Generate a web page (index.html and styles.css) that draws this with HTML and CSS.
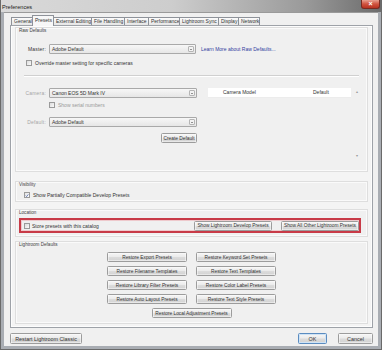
FILE: index.html
```html
<!DOCTYPE html>
<html>
<head>
<meta charset="utf-8">
<link rel="stylesheet" href="styles.css">
</head>
<body>
<div class="window">
  <div class="titlebar">
    <span class="title">Preferences</span>
    <div class="close">×</div>
  </div>
  <div class="client">
    <div class="tabs">
      <div class="tab t-general">General</div>
      <div class="tab active t-presets">Presets</div>
      <div class="tab t-ext">External Editing</div>
      <div class="tab t-file">File Handling</div>
      <div class="tab t-iface">Interface</div>
      <div class="tab t-perf">Performance</div>
      <div class="tab t-sync">Lightroom Sync</div>
      <div class="tab t-disp">Display</div>
      <div class="tab t-net">Network</div>
    </div>
    <div class="panel">
      <section class="group raw">
        <div class="glabel">Raw Defaults</div>
        <div class="row master-row">
          <span class="flabel">Master:</span>
          <div class="select master"><span>Adobe Default</span><i class="arrow"></i></div>
          <span class="link">Learn More about Raw Defaults...</span>
        </div>
        <div class="check override"><span class="box"></span><span>Override master setting for specific cameras</span></div>
        <div class="sep"></div>
        <div class="camera-area">
          <div class="cam-left">
            <div class="row">
              <span class="flabel dis">Camera:</span>
              <div class="select"><span>Canon EOS 5D Mark IV</span><i class="arrow"></i></div>
            </div>
            <div class="check serial"><span class="box"></span><span>Show serial numbers</span></div>
            <div class="row default-row">
              <span class="flabel dis">Default:</span>
              <div class="select"><span>Adobe Default</span><i class="arrow"></i></div>
            </div>
            <div class="create-wrap"><div class="btn create dim">Create Default</div></div>
          </div>
          <div class="table">
            <div class="tmain">
              <div class="thead"><span class="c1">Camera Model</span><span class="c2">Default</span></div>
              <div class="tbody"></div>
            </div>
            <div class="scroll"><span>▴</span><span>▾</span></div>
          </div>
        </div>
      </section>

      <section class="group vis">
        <div class="glabel">Visibility</div>
        <div class="check partial"><span class="box checked"><svg viewBox="0 0 6 6" width="5" height="5"><path d="M1 3.2 L2.4 4.6 L5 1.3" fill="none" stroke="#2b4a9a" stroke-width="1"/></svg></span><span>Show Partially Compatible Develop Presets</span></div>
      </section>

      <section class="group loc">
        <div class="glabel">Location</div>
        <div class="redbox">
          <div class="check store"><span class="box"></span><span>Store presets with this catalog</span></div>
          <div class="loc-btns">
            <div class="btn lbtn">Show Lightroom Develop Presets</div>
            <div class="btn lbtn">Show All Other Lightroom Presets</div>
          </div>
        </div>
      </section>

      <section class="group lrd">
        <div class="glabel">Lightroom Defaults</div>
        <div class="restore-grid">
          <div class="btn rbtn">Restore Export Presets</div>
          <div class="btn rbtn">Restore Keyword Set Presets</div>
          <div class="btn rbtn">Restore Filename Templates</div>
          <div class="btn rbtn">Restore Text Templates</div>
          <div class="btn rbtn">Restore Library Filter Presets</div>
          <div class="btn rbtn">Restore Color Label Presets</div>
          <div class="btn rbtn">Restore Auto Layout Presets</div>
          <div class="btn rbtn">Restore Text Style Presets</div>
          <div class="btn rbtn span2">Restore Local Adjustment Presets</div>
        </div>
      </section>
    </div>
    <div class="bottom">
      <div class="btn big restart">Restart Lightroom Classic</div>
      <div class="okc">
        <div class="btn big ok">OK</div>
        <div class="btn big cancel">Cancel</div>
      </div>
    </div>
  </div>
</div>
</body>
</html>
```
FILE: styles.css
```css
* { box-sizing: border-box; }
html, body { margin: 0; padding: 0; }
body {
  width: 382px;
  height: 350px;
  overflow: hidden;
  font-family: "Liberation Sans", Arial, sans-serif;
  font-size: 5px;
  color: #333;
  background: #f0f0f0;
}
.window {
  width: 382px;
  height: 350px;
  display: flex;
  flex-direction: column;
  background: #a9adb3;
  border: 1px solid #6a6a6a;
  border-top: none;
}
.titlebar {
  height: 12px;
  flex: none;
  position: relative;
  background: linear-gradient(to right, #d9d9d9 0%, #cdcdcd 45%, #9a9a9a 80%, #6c6c6c 100%);
  display: flex;
  align-items: center;
  padding-left: 1px;
}
.title {
  font-size: 5.6px;
  color: #1a1a1a;
  line-height: 8px;
  margin-top: 1px;
}
.close {
  position: absolute;
  right: 1px;
  top: 0;
  width: 19px;
  height: 9px;
  border: 1px solid #7a2a20;
  border-top: none;
  border-radius: 0 0 3px 3px;
  background: linear-gradient(#e8a090, #d0533f 50%, #b83220);
  color: #fff;
  font-size: 7px;
  line-height: 8px;
  text-align: center;
  font-weight: bold;
}
.client {
  flex: 1;
  margin: 0 3px 3px 3px;
  background: #f0f0f0;
  border-top: 1px solid #9a9a9a;
  padding: 1px 5px 0 6px;
  display: flex;
  flex-direction: column;
}
.tabs {
  height: 11px;
  display: flex;
  align-items: flex-end;
  padding-left: 1px;
  position: relative;
  z-index: 2;
}
.tab {
  height: 8px;
  border: 1px solid #8e9299;
  border-bottom: none;
  border-right: none;
  background: linear-gradient(#fbfbfb, #e6e6e6);
  padding: 0 2px;
  line-height: 7px;
  white-space: nowrap;
  color: #333;
  text-align: center;
}
.tab:last-child { border-right: 1px solid #8e9299; }
.tab.active {
  height: 11px;
  margin-bottom: -1px;
  background: #f7f7f7;
  border-right: 1px solid #8e9299;
  line-height: 9px;
  padding-bottom: 1px;
}
.tab.active + .tab { border-left: none; }
.t-general { width: 21px; }
.t-presets { width: 22px; }
.t-ext { width: 37px; }
.t-file { width: 33px; }
.t-iface { width: 24px; }
.t-perf { width: 31px; }
.t-sync { width: 39px; }
.t-disp { width: 20px; }
.t-net { width: 22px; }

.panel {
  height: 303px;
  border: 1px solid #9ea2a8;
  background: #f4f4f4;
  box-shadow: inset 0 0 0 1px #fdfdfd;
  padding: 1px 4px 0 4px;
  display: flex;
  flex-direction: column;
}
.group {
  border: 1px solid #dedede;
  box-shadow: inset 0 0 0 1px #fafafa;
  background: #f0f0f0;
  flex: none;
}
.glabel {
  height: 6px;
  line-height: 6px;
  padding-left: 3px;
  font-size: 4.6px;
  color: #444;
}
.raw { height: 145px; margin-bottom: 9px; }
.vis { height: 21px; margin-bottom: 7px; }
.loc { height: 28px; margin-bottom: 4px; }
.lrd { height: 83px; }

.row {
  display: flex;
  align-items: center;
  height: 10px;
}
.master-row { margin-top: 10px; }
.flabel {
  width: 30px;
  margin-right: 3px;
  text-align: right;
  color: #333;
  letter-spacing: 0.2px;
}
.flabel.dis { color: #a6a6a6; }
.select {
  width: 148px;
  height: 10px;
  border: 1px solid #a9a9a9;
  border-radius: 1px;
  background: linear-gradient(#f7f7f7, #e6e6e6);
  display: flex;
  align-items: center;
  padding-left: 2px;
  color: #333;
  position: relative;
}
.select span { flex: 1; }
.select.master { width: 147px; }
.arrow {
  width: 6px;
  height: 6px;
  margin-right: 1px;
  border: 1px solid #b5b5b5;
  border-radius: 1px;
  background: #f2f2f2;
  position: relative;
}
.arrow::after {
  content: "";
  position: absolute;
  left: 1px;
  top: 1.5px;
  border-left: 1.5px solid transparent;
  border-right: 1.5px solid transparent;
  border-top: 1.5px solid #333;
}
.link {
  margin-left: 5px;
  color: #30409f;
}
.check {
  display: flex;
  align-items: center;
  height: 8px;
}
.box {
  width: 6px;
  height: 6px;
  border: 1px solid #9a9a9a;
  background: linear-gradient(135deg, #dcdcdc, #fafafa);
  margin-right: 3px;
  display: flex;
  align-items: center;
  justify-content: center;
  flex: none;
}
.box svg { display: block; }
.override { margin-top: 5px; padding-left: 10px; }
.sep {
  margin: 8px 8px 0 8px;
  height: 2px;
  border-top: 1px solid #d0d0d0;
  border-bottom: 1px solid #ffffff;
}
.camera-area {
  margin-top: 11px;
  display: flex;
  align-items: flex-start;
}
.cam-left {
  width: 181px;
  display: flex;
  flex-direction: column;
}
.serial { margin-top: 3px; padding-left: 33px; color: #999; }
.default-row { margin-top: 8px; }
.create-wrap {
  margin-top: 6px;
  display: flex;
  justify-content: flex-end;
}
.create { width: 36px; height: 10px; }
.dim { color: #8a8a8a; }
.table {
  margin-left: 11px;
  display: flex;
  height: 72px;
}
.tmain {
  width: 143px;
  display: flex;
  flex-direction: column;
}
.thead {
  height: 10px;
  background: #ffffff;
  border-bottom: 1px solid #ececec;
  position: relative;
  line-height: 9px;
  color: #333;
}
.thead .c1 { position: absolute; left: 15px; }
.thead .c2 { position: absolute; left: 105px; }
.tbody { flex: 1; background: #f0f0f0; }
.scroll {
  width: 11px;
  display: flex;
  flex-direction: column;
  justify-content: space-between;
  align-items: center;
  color: #9a9a9a;
  font-size: 4px;
  padding: 1px 0 2px 0;
}

.partial { margin-top: 3px; padding-left: 8px; }
.box.checked { background: linear-gradient(135deg, #e2e2e2, #ffffff); }

.redbox {
  margin: 2px 6px 0 3px;
  height: 15px;
  border: 2px solid #c83a47;
  box-shadow: inset 0 0 0 1px #eec9cc;
  display: flex;
  align-items: center;
  justify-content: space-between;
  padding-left: 3px;
}
.store .box { margin-right: 2px; }
.loc-btns {
  display: flex;
  gap: 9px;
}
.lbtn { width: 78px; height: 10px; }

.btn {
  border: 1px solid #9c9c9c;
  border-radius: 1.5px;
  background: linear-gradient(#f6f6f6 0%, #ebebeb 48%, #dcdcdc 52%, #d2d2d2 100%);
  box-shadow: inset 0 0 0 0.5px #fcfcfc;
  display: flex;
  align-items: center;
  justify-content: center;
  white-space: nowrap;
  color: #333;
  font-size: 4.8px;
}
.restore-grid {
  margin-top: 4px;
  display: grid;
  grid-template-columns: 80px 80px;
  column-gap: 9px;
  row-gap: 4px;
  justify-content: center;
}
.rbtn { height: 10px; width: 80px; }
.span2 { grid-column: 1 / span 2; justify-self: center; }

.bottom {
  margin-top: 5px;
  display: flex;
  justify-content: space-between;
  align-items: center;
}
.big { height: 11px; font-size: 5.4px; }
.restart { width: 72px; }
.okc { display: flex; gap: 11px; }
.ok { width: 29px; border-color: #5b8cc0; box-shadow: inset 0 0 0 1px #cfe3f5; }
.cancel { width: 35px; }
```
